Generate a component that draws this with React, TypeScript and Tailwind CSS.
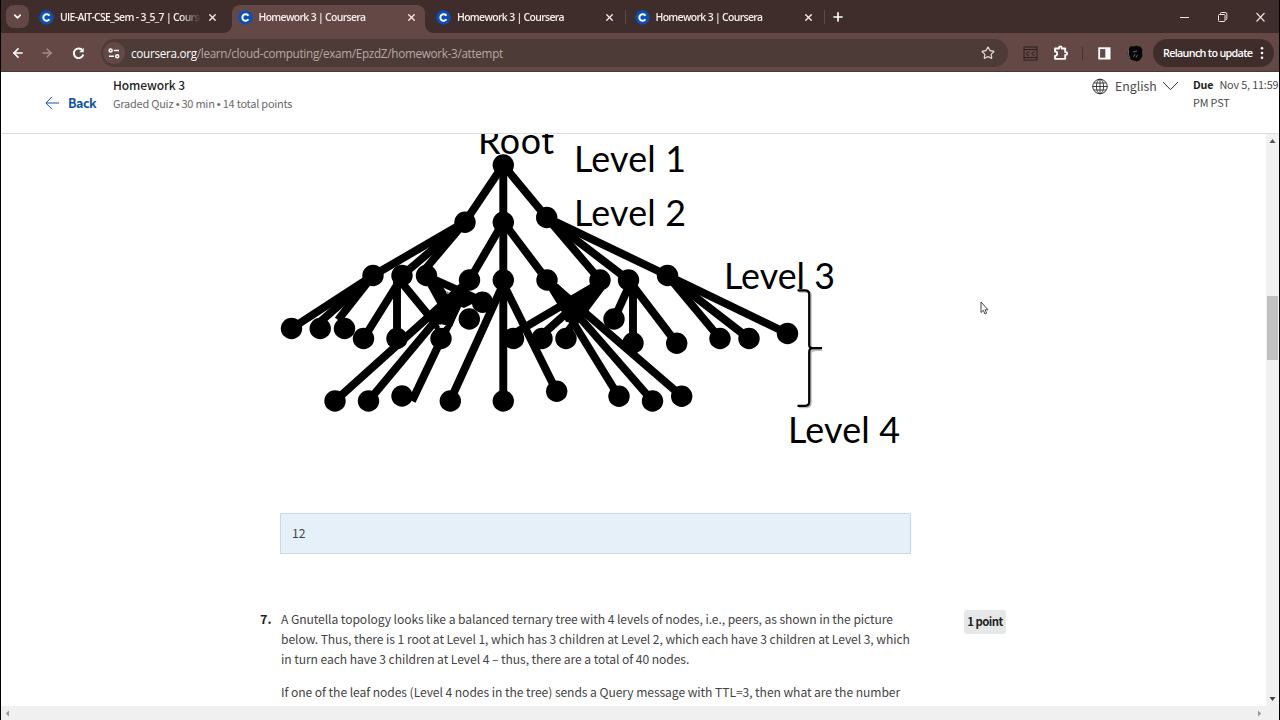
import { ArrowLeft, ArrowRight, ChevronDown, Plus, Star, X } from "lucide-react";

type Point = [number, number];

const PAGE_FONT = "font-['Noto_Sans_CJK_SC','Open_Sans',sans-serif]";
const UI_FONT = "font-['Open_Sans','Noto_Sans',sans-serif]";

const EDGES: [Point, Point][] = [
  // level 1 -> 2
  [[503.3, 165], [465, 222]],
  [[503.3, 165], [503.3, 222]],
  [[503.3, 165], [546.7, 217.5]],
  // level 2 -> 3
  [[465, 222], [373, 275.5]],
  [[465, 222], [402, 275.5]],
  [[465, 222], [424.5, 270]],
  [[503.3, 222], [469.5, 280]],
  [[503.3, 222], [503.3, 280]],
  [[503.3, 222], [547, 280]],
  [[546.7, 217.5], [600, 280]],
  [[546.7, 217.5], [628.5, 280]],
  [[546.7, 217.5], [667.5, 275.5]],
  // level 3 -> 4
  [[373, 275.5], [291.5, 328.5]],
  [[373, 275.5], [320, 322]],
  [[373, 275.5], [338, 320]],
  [[402, 277], [363.5, 338.5]],
  [[397, 280], [397, 338]],
  [[402, 283], [439, 328]],
  [[426.5, 276], [482.5, 301]],
  [[426.5, 276], [448, 315]],
  [[469.5, 280], [335, 401]],
  [[469.5, 280], [368.5, 401]],
  [[469.5, 280], [412, 401]],
  [[503.3, 284], [450, 401]],
  [[503.3, 284], [503.3, 401]],
  [[503.3, 284], [556.5, 391]],
  [[547, 280], [618.5, 396]],
  [[547, 280], [652.5, 401]],
  [[547, 280], [681.5, 396]],
  [[600, 283], [513.5, 334]],
  [[600, 283], [542, 335]],
  [[603, 283], [566, 334]],
  [[630, 284], [614, 319]],
  [[633, 284], [633, 342]],
  [[630, 282], [676.5, 343]],
  [[667.5, 275.5], [720, 338.5]],
  [[667.5, 275.5], [749, 338.5]],
  [[667.5, 275.5], [787.5, 333.5]],
];

const NODES: Point[] = [
  [503.3, 165],
  [465, 222.3], [503.3, 222.3], [546.7, 217.5],
  [373, 275.5], [402, 275.5], [426.5, 275.5], [469.5, 280], [503.3, 280],
  [547, 280], [600, 280], [628.5, 280], [667.5, 275.5],
  [291.5, 328.5], [320.2, 328.5], [344.5, 328.5], [363.5, 338.5], [397, 338.5], [441, 338.5],
  [482.5, 302.3], [469.3, 319],
  [513.5, 338.5], [542, 338.5], [566, 338.5], [614, 319], [633, 343], [676.7, 343.3],
  [720, 338.5], [749, 338.5], [787.5, 333.5],
  [335, 401], [368.5, 401], [402, 396], [450.3, 401], [503.3, 401], [556.7, 391.3],
  [619, 396.3], [652.5, 401], [681.7, 396.3],
];

const LABELS = [
  { text: "Root", x: 478, y: 153.5, width: 76 },
  { text: "Level 1", x: 574, y: 172, width: 112 },
  { text: "Level 2", x: 574, y: 225.5, width: 112 },
  { text: "Level 3", x: 724, y: 288.5, width: 111 },
  { text: "Level 4", x: 788, y: 442.5, width: 112 },
];

function TreeDiagram() {
  return (
    <svg className="block" width="640" height="326" viewBox="270 134 640 326">
      <g stroke="#000" strokeWidth="7.9">
        {EDGES.map(([a, b], i) => (
          <line key={i} x1={a[0]} y1={a[1]} x2={b[0]} y2={b[1]} />
        ))}
      </g>
      <path d="M428 284L438 303L434 320L440 324L452 327L461 304L450 297L440 283Z" />
      <path d="M462 292L476 296L474 303L464 308L459 306Z" />
      <path d="M551 286L566 322L580 322L604 290L594 284L572 298L558 284Z" />
      <g>
        {NODES.map(([x, y], i) => (
          <circle key={i} cx={x} cy={y} r="10.7" />
        ))}
      </g>
      <circle cx="447.5" cy="292.8" r="1.3" fill="#888" />
      <path d="M438.5 324.5L446 325L443.5 328L440 327Z" fill="#fff" />
      <path
        d="M799 291.5H805Q810.5 291.5 810.5 295V346Q810.5 349.5 822 349.5Q810.5 349.5 810.5 353V403Q810.5 407 806 407H799"
        fill="none"
        stroke="#bbb"
        strokeWidth="2.5"
      />
      <path
        d="M797.5 290.3H805Q809.2 290.3 809.2 294V345Q809.2 348.2 813 348.2H822M813 348.2Q809.2 348.2 809.2 352V402Q809.2 405.8 805 405.8H797.5"
        fill="none"
        stroke="#000"
        strokeWidth="2.2"
      />
      <g className="font-[Lato,sans-serif]" fontSize="35.8">
        {LABELS.map((l) => (
          <text key={l.text} x={l.x} y={l.y} textLength={l.width}>
            {l.text}
          </text>
        ))}
      </g>
    </svg>
  );
}

function CourseraMark() {
  return (
    <svg className="shrink-0" width="15" height="15" viewBox="0 0 15 15" fill="none">
      <circle cx="7.5" cy="7.5" r="7.2" fill="#0b50b8" />
      <path d="M10.4 5.7A3.3 3.3 0 1 0 10.4 9.3" stroke="#fff" strokeWidth="2" />
    </svg>
  );
}

function Tab({ title, active, divider }: { title: string; active?: boolean; divider?: boolean }) {
  return (
    <div
      className={
        active
          ? "relative flex h-7 w-[193px] items-center rounded-t-lg bg-[#644846] pl-[6px]"
          : "relative flex h-7 w-[193px] items-center pl-[6px]"
      }
    >
      {active && (
        <>
          <span className="absolute bottom-0 -left-2 size-2 bg-[radial-gradient(circle_at_0_0,#3f2d2c_7.5px,#644846_8px)]" />
          <span className="absolute -right-2 bottom-0 size-2 bg-[radial-gradient(circle_at_100%_0,#3f2d2c_7.5px,#644846_8px)]" />
        </>
      )}
      <div className="relative -top-[2px] flex flex-1 items-center">
        <CourseraMark />
        <span className="ml-[6px] w-[140px] overflow-hidden mask-[linear-gradient(to_right,#000_120px,transparent_141px)] text-[10.4px] leading-4 font-semibold tracking-[-0.65px] whitespace-nowrap text-[#f6eeed]">
          {title}
        </span>
        <X className="ml-[7px] text-[#f3e9e8]" size={11} strokeWidth={3} />
      </div>
      {divider && <span className="absolute top-[5px] -right-[3px] h-[14px] w-px bg-[#644846]" />}
    </div>
  );
}

function TabStrip() {
  return (
    <div className="flex h-[33px] items-end bg-[#3f2d2c]">
      <div className="mb-[5px] ml-[5px] flex size-[23px] items-center justify-center self-end rounded-lg bg-[#644846] text-white">
        <ChevronDown size={11} strokeWidth={3.5} />
      </div>
      <div className="ml-[4px] flex gap-[5.5px]">
        <Tab title="UIE-AIT-CSE_Sem - 3_5_7 | Coursera" />
        <Tab title="Homework 3 | Coursera" active />
        <Tab title="Homework 3 | Coursera" divider />
        <Tab title="Homework 3 | Coursera" divider />
      </div>
      <Plus className="mb-[9px] ml-[9px] text-white" size={14} strokeWidth={2.8} />
      <div className="mb-[10px] ml-auto flex items-center gap-[27px] pr-[13px] text-[#eee4e3]">
        <svg width="11" height="12" viewBox="0 0 11 12">
          <path d="M1 6.5H10" stroke="currentColor" />
        </svg>
        <svg width="11" height="12" viewBox="0 0 11 12" fill="none" stroke="currentColor">
          <rect x="1.5" y="3.5" width="6.5" height="7" rx="1" />
          <path d="M3.5 3V2.5Q3.5 1.5 4.5 1.5H8Q9.8 1.5 9.8 3V7.5Q9.8 8.8 8.5 8.8" />
        </svg>
        <svg width="11" height="12" viewBox="0 0 11 12" stroke="currentColor" strokeWidth="1.1">
          <path d="M1.5 2L9.5 10.5M9.5 2L1.5 10.5" />
        </svg>
      </div>
    </div>
  );
}

function Toolbar() {
  return (
    <div className="flex h-[39px] items-center border-b border-[#4c3836] bg-[#644846] pt-[2px] pr-1 pl-[10px]">
      <ArrowLeft className="text-white" size={14} strokeWidth={2.8} />
      <ArrowRight className="ml-[15px] text-[#a58d8b]" size={14} strokeWidth={2.3} />
      <svg className="ml-[18px] text-white" width="13" height="13" viewBox="0 0 13 13" fill="none">
        <path d="M10.5 3.4A4.8 4.8 0 1 0 11.3 7.5" stroke="currentColor" strokeWidth="1.9" />
        <path d="M11.7 0.7V5.2H7.2Z" fill="currentColor" />
      </svg>
      <div className="ml-[16px] flex h-7 w-[907px] items-center rounded-full bg-[#4d3b38] pr-[13px] pl-[2px]">
        <span className="flex size-[22px] items-center justify-center rounded-full bg-[#644846]">
          <svg width="12" height="11" viewBox="0 0 12 11" fill="none" stroke="#fff" strokeWidth="1.5">
            <circle cx="2.6" cy="2.6" r="1.5" />
            <path d="M5.8 2.6H11M1 8.2H6" />
            <circle cx="9.2" cy="8.2" r="1.5" />
          </svg>
        </span>
        <p className="ml-[6px] text-[11.7px] leading-5 tracking-[-0.29px] whitespace-nowrap text-[#b9a8a6]">
          <span className="text-white">coursera.org</span>
          /learn/cloud-computing/exam/EpzdZ/homework-3/attempt
        </p>
        <Star className="ml-auto text-[#e0d4d3]" size={14} strokeWidth={2.2} />
      </div>
      <svg className="ml-[15px]" width="15" height="15" viewBox="0 0 15 15" fill="none" stroke="#2b1e1d">
        <rect x="1" y="1" width="13" height="13" />
        <path d="M1 3.5H14M1 11.5H14" />
        <path d="M6.3 6.3A1.7 1.7 0 1 0 6.3 8.9M11.8 6.3A1.7 1.7 0 1 0 11.8 8.9" />
      </svg>
      <svg className="ml-[15px]" width="16" height="16" viewBox="0 0 16 16" fill="none">
        <path
          d="M2 3.5H6V2.7A1.3 1.3 0 0 1 8.7 2.7V3.5H12.2V7.2H12.9A1.3 1.3 0 0 1 12.9 9.8H12.2V13.8H2V10.8A2.1 2.1 0 0 0 2 6.5Z"
          stroke="#fff"
          strokeWidth="1.8"
          strokeLinejoin="round"
        />
      </svg>
      <span className="ml-[13px] h-[13px] w-px bg-[#49312f]" />
      <svg className="ml-[15px]" width="13" height="13" viewBox="0 0 13 13" fill="none">
        <rect x="1.2" y="1.2" width="10.4" height="10.4" stroke="#fff" strokeWidth="1.8" />
        <path d="M7.3 1H12V12H7.3Z" fill="#fff" />
      </svg>
      <svg className="ml-[16px]" width="16" height="17" viewBox="0 0 16 17">
        <circle cx="8" cy="8.5" r="7.3" fill="#15100f" />
        <path d="M2.5 2.5L4 1L7 2L9 0.5L12 1.5L13.5 1.5L15.5 5L14.5 8L15.5 11L13 15L10 16.5L4 14L1 9Z" fill="#090808" />
        <path d="M1.6 5Q0.4 9 3 13.5M6 7L10 6M8 9L6.5 12M10.5 10L9 12.5" stroke="#596e6b" fill="none" />
      </svg>
      <div className="ml-[10px] flex h-7 w-[121px] items-center rounded-full bg-[#3f2d2c] pl-[10px] text-[10.8px] font-semibold tracking-[-0.7px] whitespace-nowrap text-white">
        <span className="w-[92px]">Relaunch to update</span>
        <svg className="ml-[5px] shrink-0" width="4" height="14" viewBox="0 0 4 14" fill="#fff">
          <circle cx="2" cy="2.2" r="1.3" />
          <circle cx="2" cy="7" r="1.3" />
          <circle cx="2" cy="11.8" r="1.3" />
        </svg>
      </div>
    </div>
  );
}

function Bullet() {
  return <span className="font-['Liberation_Sans',sans-serif]">•</span>;
}

function QuizHeader() {
  return (
    <header className="flex h-[62px] items-start border-b border-[#dcdcdc] bg-white text-[#1f1f1f]">
      <div className="mt-[21px] ml-[44px] flex w-[68px] items-center text-[#0f53a5]">
        <svg width="14" height="14" viewBox="0 0 14 14" fill="none" stroke="currentColor">
          <path d="M14 7H1M7 0.8L0.9 7L7 13.2" />
        </svg>
        <span className="ml-[9px] text-[12.5px] leading-5 font-bold tracking-[-0.5px]">Back</span>
      </div>
      <div className="mt-1">
        <h1 className="text-[12px] leading-[18px] font-medium tracking-[-0.1px]">Homework 3</h1>
        <p className="text-[11px] leading-[18px] tracking-[-0.24px] text-[#6b6b6b]">
          Graded Quiz <Bullet /> 30 min <Bullet /> 14 total points
        </p>
      </div>
      <div className="mt-[4px] ml-auto flex items-center">
        <svg width="16" height="17" viewBox="0 0 16 17" fill="none" stroke="#333" strokeWidth="0.95">
          <circle cx="8" cy="8.5" r="7.3" />
          <ellipse cx="8" cy="8.5" rx="3.6" ry="7.3" />
          <path d="M8 1.2V15.8M0.7 8.5H15.3M1.7 5H14.3M1.7 12H14.3" />
        </svg>
        <span className="ml-[7px] w-[41px] text-[12.3px] leading-5 text-[#4a4a4a]">English</span>
        <svg className="ml-[6px]" width="17" height="10" viewBox="0 0 17 10" fill="none" stroke="#333">
          <path d="M1 1L8.5 8.7L16 1" />
        </svg>
      </div>
      <p className="mt-[3px] ml-[14px] w-[86px] text-[10.8px] leading-[18px] tracking-[-0.15px] whitespace-nowrap text-[#4a4a4a]">
        <span className="mr-[6px] font-bold text-[#1f1f1f]">Due</span>
        Nov 5, 11:59
        <br />
        PM PST
      </p>
    </header>
  );
}

function Question() {
  return (
    <div className="mt-[55px] flex items-start text-[#444]">
      <span className="w-[22px] pl-px text-[12.5px] leading-5 font-bold text-[#1f1f1f]">7.</span>
      <div className="w-[683px] text-[12.1px] leading-5 tracking-[-0.065px] whitespace-nowrap">
        <p>
          A Gnutella topology looks like a balanced ternary tree with 4 levels of nodes, i.e., peers, as shown in the picture
          <br />
          below. Thus, there is 1 root at Level 1, which has 3 children at Level 2, which each have 3 children at Level 3, which
          <br />
          in turn each have 3 children at Level 4 – thus, there are a total of 40 nodes.
        </p>
        <p className="mt-[13px]">
          If one of the leaf nodes (Level 4 nodes in the tree) sends a Query message with TTL=3, then what are the number
        </p>
      </div>
      <span className="mt-px flex h-6 w-[42px] items-center justify-center rounded-[3px] bg-[#e5e7e8] text-[11.4px] font-bold tracking-[-0.55px] whitespace-nowrap text-[#1f1f1f]">
        1 point
      </span>
    </div>
  );
}

function Scrollbar() {
  return (
    <div className="flex w-[13px] flex-col items-center bg-[#f1f1f1]">
      <svg className="mt-[4px]" width="7" height="6" viewBox="0 0 7 6" fill="#555">
        <path d="M0.5 5L3.5 1L6.5 5Z" />
      </svg>
      <div className="mt-[152px] h-[64px] w-[11px] bg-[#c1c1c1]" />
      <svg className="mt-auto mb-[4px]" width="7" height="6" viewBox="0 0 7 6" fill="#444">
        <path d="M0.5 1L3.5 5L6.5 1Z" />
      </svg>
    </div>
  );
}

export default function App() {
  return (
    <div className={`flex h-[720px] w-[1280px] flex-col overflow-hidden border-r border-l border-black bg-white ${PAGE_FONT}`}>
      <div className={UI_FONT}>
        <TabStrip />
        <Toolbar />
      </div>
      <QuizHeader />
      <div className="relative flex h-[572px]">
        <main className="flex-1 overflow-hidden pl-[258px]">
          <div className="pl-[11px]">
            <TreeDiagram />
          </div>
          <div className="mt-[53px] ml-[21px] flex h-[41px] w-[631px] items-center border border-[#ccdae5] bg-[#e5f0f9] pl-[11px] text-[12.2px] text-[#444]">
            12
          </div>
          <Question />
        </main>
        <Scrollbar />
        {/* pointer */}
        <svg className="absolute top-[167px] left-[979px]" width="9" height="14" viewBox="0 0 9 14">
          <path d="M1 1V11.5L3.3 9.3L5 13L6.6 12.2L5 8.8H8Z" fill="#fff" stroke="#333" strokeWidth="0.9" />
        </svg>
      </div>
      <div className="flex h-[14px] items-center justify-between bg-[#f0f0f0] pr-[17px] pl-[4px]">
        <svg width="5" height="7" viewBox="0 0 5 7" fill="#999">
          <path d="M4 0.5L0.8 3.5L4 6.5Z" />
        </svg>
        <svg width="5" height="7" viewBox="0 0 5 7" fill="#999">
          <path d="M1 0.5L4.2 3.5L1 6.5Z" />
        </svg>
      </div>
    </div>
  );
}
